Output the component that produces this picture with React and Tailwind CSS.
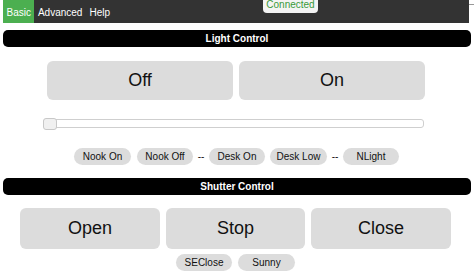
import React from "react";

function Pill({ children, className = "" }) {
  return (
    <div className={`h-[17px] w-[56px] flex items-center justify-center rounded-full bg-[#dcdcdc] text-[10px] text-[#111] ${className}`}>
      {children}
    </div>
  );
}

function BigBtn({ children, w, h }) {
  return (
    <div
      className={`flex items-center justify-center rounded-[6px] bg-[#dcdcdc] text-[18px] text-[#111] ${w} ${h}`}
    >
      {children}
    </div>
  );
}

export default function App() {
  return (
    <div
      className="relative w-[474px] h-[278px] overflow-hidden bg-white"
      style={{ fontFamily: '"Liberation Sans", Arial, sans-serif' }}
    >
      {/* Nav */}
      <div className="ml-[3px] w-[466px] h-[23px] bg-[#333333] flex items-stretch text-[10px] text-white">
        <div className="bg-[#4caf50] px-[3.5px] flex items-center pt-[1px]">Basic</div>
        <div className="px-[3.5px] flex items-center pt-[1px]">Advanced</div>
        <div className="px-[3.5px] flex items-center pt-[1px]">Help</div>
      </div>
      <div className="absolute left-[469px] top-[4px] w-[5px] h-[1px] bg-[#999]" />
      <div className="absolute left-[263px] top-[-4px] w-[55px] h-[17px] rounded-[4px] bg-[#f4f4f4] text-[#3a9a3a] text-[10px] leading-none flex items-end justify-center pb-[3px]">
        Connected
      </div>

      {/* Light Control */}
      <div className="mt-[7px] mx-[3px] h-[17px] rounded-[5px] bg-black text-white font-bold text-[10px] flex items-center justify-center">
        Light Control
      </div>
      <div className="mt-[14px] flex gap-[6px] pl-[47px]">
        <BigBtn w="w-[186px]" h="h-[39px]">Off</BigBtn>
        <BigBtn w="w-[186px]" h="h-[39px]">On</BigBtn>
      </div>
      {/* slider */}
      <div className="mt-[19px] ml-[43px] w-[381px] h-[9px] relative">
        <div className="absolute inset-0 rounded-[3px] border border-[#cfcfcf] bg-white" />
        <div className="absolute left-0 top-[-1px] w-[14px] h-[12px] rounded-[3px] border border-[#c8c8c8] bg-[#f0f0f0]" />
      </div>
      <div className="mt-[20px] flex items-center pl-[74px] text-[10px] text-[#111]">
        <Pill className="w-[57px]">Nook On</Pill>
        <Pill className="ml-[6px]">Nook Off</Pill>
        <span className="w-[16px] text-center">--</span>
        <Pill>Desk On</Pill>
        <Pill className="ml-[5px] w-[57px]">Desk Low</Pill>
        <span className="w-[16px] text-center">--</span>
        <Pill>NLight</Pill>
      </div>

      {/* Shutter Control */}
      <div className="mt-[13px] mx-[3px] h-[17px] rounded-[5px] bg-black text-white font-bold text-[10px] flex items-center justify-center">
        Shutter Control
      </div>
      <div className="mt-[13px] flex gap-[6px] pl-[20px]">
        <BigBtn w="w-[140px]" h="h-[41px]">Open</BigBtn>
        <BigBtn w="w-[139px]" h="h-[41px]">Stop</BigBtn>
        <BigBtn w="w-[140px]" h="h-[41px]">Close</BigBtn>
      </div>
      <div className="mt-[5px] flex gap-[6px] pl-[176px]">
        <Pill>SEClose</Pill>
        <Pill className="w-[57px]">Sunny</Pill>
      </div>
    </div>
  );
}
